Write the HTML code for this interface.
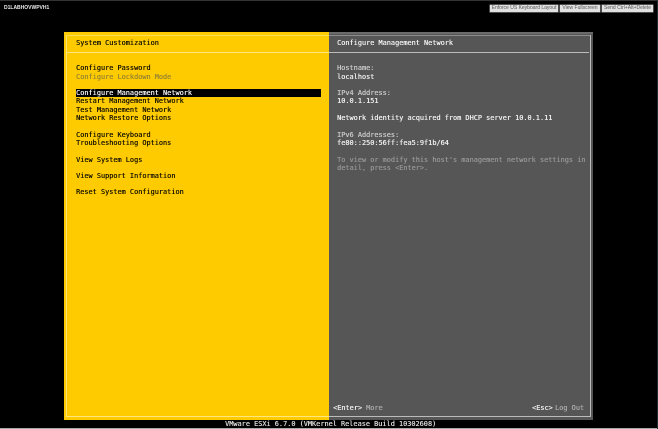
<!DOCTYPE html>
<html>
<head>
<meta charset="utf-8">
<style>
html,body{margin:0;padding:0;background:#000;width:658px;height:429px;overflow:hidden}
#root{position:relative;width:658px;height:429px;background:#000;overflow:hidden}
.abs{position:absolute}
.t{position:absolute;white-space:pre;font-family:"DejaVu Sans Mono","Liberation Mono",monospace;font-weight:normal;font-size:6.88px;line-height:8px;height:8px;margin-top:0;filter:blur(.35px);text-shadow:.25px 0 0 currentColor}
.k{color:#1a1500}
.d{color:#9a8630}
.w{color:#eeeeee}
.g{color:#a8a8a8}
.b{position:absolute;top:5px;height:7px;background:#e0e0e0;box-shadow:0 0 0 .5px #999;color:#555;font:5px/7.6px "Liberation Sans",sans-serif;text-align:center;white-space:pre;filter:blur(.25px)}
</style>
</head>
<body>
<div id="root">
<div class="abs" style="left:0;top:0;width:658px;height:1px;background:#333"></div>
<div class="abs" style="left:0;top:428px;width:658px;height:1px;background:#aaa"></div>
<div class="abs" style="left:657px;top:0;width:1px;height:429px;background:#1c3034"></div>
<div class="abs" style="left:4px;top:5px;font:bold 5px/7px 'Liberation Sans',sans-serif;color:#eee;white-space:pre;filter:blur(.2px)">D1LABHOVWPVH1</div>
<div class="b" style="left:490px;width:68px">Enforce US Keyboard Layout</div>
<div class="b" style="left:560px;width:40px">View Fullscreen</div>
<div class="b" style="left:602px;width:51px">Send Ctrl+Alt+Delete</div>

<div class="abs" style="left:64px;top:32px;width:265px;height:388px;background:#fecb00"></div>
<div class="abs" style="left:329px;top:32px;width:264px;height:388px;background:#565656"></div>
<div class="abs" style="left:329px;top:32px;width:264px;height:2px;background:#6a6a6a"></div>
<!-- frame -->
<div class="abs" style="left:66px;top:35px;width:263px;height:1px;background:#ffdc55"></div>
<div class="abs" style="left:66px;top:35px;width:1px;height:382px;background:#ffe070"></div>
<div class="abs" style="left:67px;top:52px;width:262px;height:1px;background:#ffe680"></div>
<div class="abs" style="left:66px;top:416px;width:263px;height:1px;background:#ffe680"></div>
<div class="abs" style="left:329px;top:35px;width:262px;height:1px;background:#8c8c8c"></div>
<div class="abs" style="left:329px;top:52px;width:260px;height:1px;background:#bcbcbc"></div>
<div class="abs" style="left:329px;top:416px;width:262px;height:1px;background:#bcbcbc"></div>
<div class="abs" style="left:590px;top:35px;width:1px;height:382px;background:#bcbcbc"></div>
<!-- selection -->
<div class="abs" style="left:76px;top:89px;width:245px;height:8px;background:#000"></div>

<div class="t k" style="left:76px;top:39px">System Customization</div>
<div class="t k" style="left:76px;top:64px">Configure Password</div>
<div class="t d" style="left:76px;top:72.5px">Configure Lockdown Mode</div>
<div class="t w" style="left:76px;top:89px">Configure Management Network</div>
<div class="t k" style="left:76px;top:97px">Restart Management Network</div>
<div class="t k" style="left:76px;top:105.5px">Test Management Network</div>
<div class="t k" style="left:76px;top:114px">Network Restore Options</div>
<div class="t k" style="left:76px;top:130.5px">Configure Keyboard</div>
<div class="t k" style="left:76px;top:139px">Troubleshooting Options</div>
<div class="t k" style="left:76px;top:155.5px">View System Logs</div>
<div class="t k" style="left:76px;top:172px">View Support Information</div>
<div class="t k" style="left:76px;top:188px">Reset System Configuration</div>

<div class="t w" style="left:337px;top:39px">Configure Management Network</div>
<div class="t g" style="left:337px;top:64px;color:#c8c8c8">Hostname:</div>
<div class="t w" style="left:337px;top:72.5px">localhost</div>
<div class="t g" style="left:337px;top:89px;color:#c8c8c8">IPv4 Address:</div>
<div class="t w" style="left:337px;top:97px">10.0.1.151</div>
<div class="t w" style="left:337px;top:114px">Network identity acquired from DHCP server 10.0.1.11</div>
<div class="t g" style="left:337px;top:130.5px;color:#c8c8c8">IPv6 Addresses:</div>
<div class="t w" style="left:337px;top:139px">fe80::250:56ff:fea5:9f1b/64</div>
<div class="t g" style="left:337px;top:155.5px;color:#949494">To view or modify this host's management network settings in</div>
<div class="t g" style="left:337px;top:164px;color:#949494">detail, press &lt;Enter&gt;.</div>

<div class="t w" style="left:333px;top:403.5px">&lt;Enter&gt;</div>
<div class="t g" style="left:366px;top:403.5px">More</div>
<div class="t w" style="left:532px;top:403.5px">&lt;Esc&gt;</div>
<div class="t g" style="left:555px;top:403.5px">Log Out</div>
<div class="t" style="left:225px;top:420px;color:#d8d8d8">VMware ESXi 6.7.0 (VMKernel Release Build 10302608)</div>
</div>
</body>
</html>
